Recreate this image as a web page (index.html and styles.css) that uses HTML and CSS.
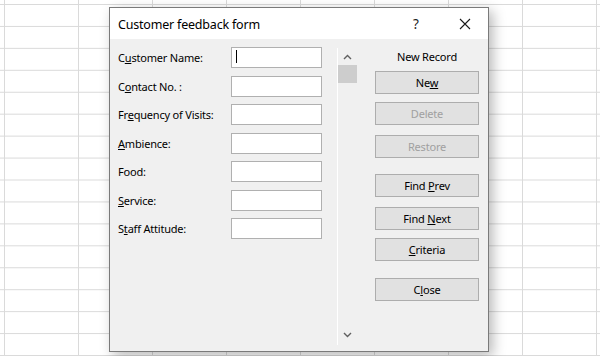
FILE: index.html
```
<!DOCTYPE html>
<html lang="en">
<head>
<meta charset="utf-8">
<title>Customer feedback form</title>
<link rel="stylesheet" href="styles.css">
</head>
<body>
<div class="sheet">
  <div class="dialog">
    <div class="titlebar">
      <span class="title">Customer feedback form</span>
      <span class="help">?</span>
      <span class="close">
        <svg width="12" height="12" viewBox="0 0 12 12"><path d="M1 1 L11 11 M11 1 L1 11" stroke="#1a1a1a" stroke-width="1.1" fill="none"/></svg>
      </span>
    </div>
    <div class="content">
      <div class="fields">
        <div class="row"><span class="label">C<u>u</u>stomer Name:</span><div class="box focused"></div></div>
        <div class="row"><span class="label">C<u>o</u>ntact No. :</span><div class="box"></div></div>
        <div class="row"><span class="label">Fr<u>e</u>quency of Visits:</span><div class="box"></div></div>
        <div class="row"><span class="label"><u>A</u>mbience:</span><div class="box"></div></div>
        <div class="row"><span class="label">Food:</span><div class="box"></div></div>
        <div class="row"><span class="label"><u>S</u>ervice:</span><div class="box"></div></div>
        <div class="row"><span class="label">S<u>t</u>aff Attitude:</span><div class="box"></div></div>
      </div>
      <div class="scrollbar">
        <span class="arrow">
          <svg width="9" height="6" viewBox="0 0 9 6"><path d="M1 5 L4.5 1.5 L8 5" stroke="#606060" stroke-width="1.4" fill="none"/></svg>
        </span>
        <div class="thumb"></div>
        <span class="arrow down">
          <svg width="9" height="6" viewBox="0 0 9 6"><path d="M1 1 L4.5 4.5 L8 1" stroke="#606060" stroke-width="1.4" fill="none"/></svg>
        </span>
      </div>
      <div class="actions">
        <div class="record">New Record</div>
        <div class="btn"><span>Ne<u>w</u></span></div>
        <div class="btn disabled g8"><span>Delete</span></div>
        <div class="btn disabled g10"><span>Restore</span></div>
        <div class="btn g16"><span>Find <u>P</u>rev</span></div>
        <div class="btn g10"><span>Find <u>N</u>ext</span></div>
        <div class="btn g8"><span><u>C</u>riteria</span></div>
        <div class="btn g17"><span>C<u>l</u>ose</span></div>
      </div>
    </div>
  </div>
</div>
</body>
</html>
```
FILE: styles.css
```
* { box-sizing: border-box; }
html, body { margin: 0; padding: 0; }
body {
  width: 600px;
  height: 356px;
  overflow: hidden;
  font-family: "Noto Sans", "Open Sans", sans-serif;
  color: #000;
  background-color: #fff;
  background-image:
    linear-gradient(to bottom, #dadada 1px, transparent 1px),
    linear-gradient(to right, #dadada 1px, transparent 1px);
  background-size: 100% 21.95px, 74px 100%;
  background-position: 0 4px, 4px 0;
}
.sheet {
  padding: 7px 0 0 109px;
}
.dialog {
  width: 380px;
  height: 345px;
  border: 1px solid #7a7a7a;
  background: #f0f0f0;
  box-shadow: 4px 4px 12px rgba(0, 0, 0, 0.28);
  display: flex;
  flex-direction: column;
}
.titlebar {
  height: 31px;
  background: #fff;
  display: flex;
  align-items: center;
  padding-left: 8px;
}
.title {
  font-size: 12.5px;
  letter-spacing: -0.2px;
  flex: 1;
  padding-top: 2px;
}
.help {
  width: 30px;
  text-align: center;
  font-size: 13.5px;
  padding-top: 1px;
  color: #222;
}
.close {
  width: 47px;
  margin-left: 10px;
  display: flex;
  justify-content: center;
  align-items: center;
}
.content {
  flex: 1;
  display: flex;
  font-size: 11px;
  letter-spacing: -0.2px;
}
.fields {
  padding: 8px 0 0 8px;
  display: flex;
  flex-direction: column;
  gap: 7.5px;
}
.row {
  display: flex;
  align-items: center;
}
.label {
  width: 113px;
  white-space: nowrap;
}
.box {
  width: 91px;
  height: 21px;
  background: #fff;
  border: 1px solid #b0b0b0;
  position: relative;
}
.box.focused::after {
  content: "";
  position: absolute;
  left: 4px;
  top: 2px;
  width: 1px;
  height: 13px;
  background: #000;
}
.scrollbar {
  margin: 9px 0 6px 15px;
  width: 20px;
  border-left: 1px solid #fff;
  display: flex;
  flex-direction: column;
}
.arrow {
  height: 17px;
  display: flex;
  align-items: center;
  justify-content: center;
}
.arrow.down {
  margin-top: auto;
  height: 20px;
}
.thumb {
  height: 18px;
  background: #cdcdcd;
}
.actions {
  margin-left: 18px;
  width: 104px;
  padding-top: 9px;
  display: flex;
  flex-direction: column;
}
.record {
  height: 17px;
  line-height: 17px;
  text-align: center;
  margin-bottom: 6px;
}
.btn {
  height: 23px;
  background: #e1e1e1;
  border: 1px solid #adadad;
  display: flex;
  align-items: center;
  justify-content: center;
}
.btn.g8 { margin-top: 8px; }
.btn.g10 { margin-top: 10px; }
.btn.g16 { margin-top: 16px; }
.btn.g17 { margin-top: 17px; }
.btn.disabled { color: #a0a0a0; }
u { text-underline-offset: 1px; }
```
